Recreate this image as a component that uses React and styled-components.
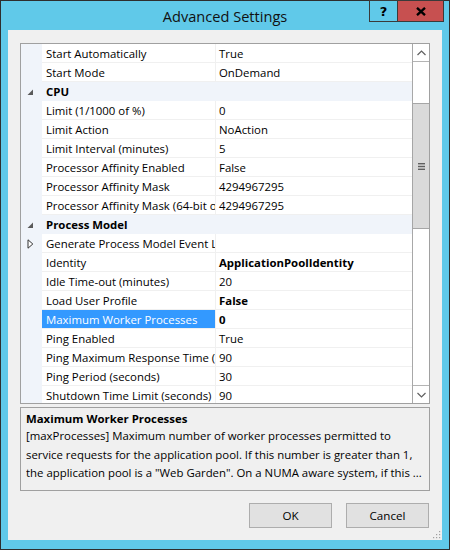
import React from 'react';
import styled, { createGlobalStyle } from 'styled-components';

const UI_FONT = `"Segoe UI", "Open Sans", "Noto Sans", sans-serif`;

const GlobalStyle = createGlobalStyle`
  html, body { margin: 0; padding: 0; background: #5fcbe9; }
  body { font-family: ${UI_FONT}; }
  * { box-sizing: border-box; }
`;

const Frame = styled.div`
  position: relative;
  width: 450px;
  height: 550px;
  border: 1px solid #2e2e2e;
  background: #60c9e9;
  display: flex;
  flex-direction: column;
`;

const TitleBar = styled.div`
  height: 29px;
  display: grid;
  grid-template-columns: 1fr auto 1fr;
  align-items: start;
`;

const Title = styled.div`
  grid-column: 2;
  font-size: 14.6px;
  color: #111;
  line-height: 29px;
  padding-top: 1px;
`;

const CaptionButtons = styled.div`
  grid-column: 3;
  justify-self: end;
  display: flex;
  margin-right: 5px;
  margin-top: -1px;
`;

const CaptionButton = styled.div`
  width: ${p => p.$w}px;
  height: 22px;
  border: 1px solid #3a3a3a;
  margin-left: ${p => (p.$joined ? '-1px' : '0')};
  background: ${p => p.$bg || 'transparent'};
  display: flex;
  align-items: center;
  justify-content: center;
  font-family: "DejaVu Sans", sans-serif;
  font-weight: bold;
  font-size: 13px;
  color: #000;
`;

const Client = styled.div`
  flex: 1;
  margin: 0 7px 9px 7px;
  background: #f0f0f0;
  padding: 13px 12px 12px 12px;
  display: flex;
  flex-direction: column;
`;

const GridBox = styled.div`
  height: 361px;
  border: 1px solid #a0a0a0;
  background: #fff;
  display: flex;
  overflow: hidden;
`;

const Rows = styled.div`
  flex: 1;
  display: flex;
  flex-direction: column;
  overflow: hidden;
`;

const Row = styled.div`
  flex: 0 0 19px;
  height: 19px;
  display: grid;
  grid-template-columns: 21px 174px 1fr;
  background: ${p => (p.$cat ? '#f0f4fa' : '#fff')};
  font-size: 11.4px;
  color: #000;
`;

const Gutter = styled.div`
  background: #f0f4fa;
  display: flex;
  align-items: center;
  justify-content: center;
`;

const NameCell = styled.div`
  padding-left: 4px;
  line-height: 19.5px;
  white-space: nowrap;
  overflow: hidden;
  border-bottom: 1px solid #f0f0f0;
  border-right: 1px solid #f0f0f0;
  background: ${p => (p.$selected ? '#3399ff' : 'transparent')};
  color: ${p => (p.$selected ? '#fff' : '#000')};
`;

const ValueCell = styled.div`
  padding-left: 3px;
  line-height: 19.5px;
  white-space: nowrap;
  overflow: hidden;
  border-bottom: 1px solid #f0f0f0;
  font-weight: ${p => (p.$bold ? 700 : 400)};
`;

const CategoryCell = styled.div`
  grid-column: 2 / 4;
  padding-left: 4px;
  line-height: 19.5px;
  font-weight: 700;
  border-bottom: 1px solid #f0f0f0;
`;

const ScrollBar = styled.div`
  width: 17px;
  border-left: 1px solid #a8a8a8;
  background: #fff;
  display: flex;
  flex-direction: column;
`;

const ScrollButton = styled.div`
  height: 18px;
  flex: 0 0 18px;
  display: flex;
  align-items: center;
  justify-content: center;
  border-top: ${p => (p.$down ? '1px solid #b4b4b4' : 'none')};
  border-bottom: ${p => (p.$down ? 'none' : '1px solid #b4b4b4')};
`;

const Track = styled.div`
  flex: 1;
  display: flex;
  flex-direction: column;
  padding-top: 41px;
`;

const Thumb = styled.div`
  height: 126px;
  margin-left: -1px;
  background: #dadada;
  border: 1px solid #a6a6a6;
  border-right: none;
  display: flex;
  align-items: center;
  justify-content: center;
`;

const Description = styled.div`
  margin-top: 3px;
  height: 84px;
  border: 1px solid #a0a0a0;
  background: #f0f0f0;
  padding: 2px 5px;
  font-size: 11.4px;
  color: #000;
`;

const DescTitle = styled.div`
  font-weight: 700;
  line-height: 17px;
  margin-bottom: 0;
`;

const DescLine = styled.div`
  line-height: 18.5px;
  white-space: nowrap;
  overflow: hidden;
`;

const ButtonRow = styled.div`
  margin-top: auto;
  display: flex;
  justify-content: flex-end;
  gap: 14px;
  padding-right: 1px;
`;

const DialogButton = styled.button`
  width: 83px;
  height: 25px;
  border: 1px solid #adadad;
  background: #e1e1e1;
  font-family: ${UI_FONT};
  font-size: 11.6px;
  color: #000;
  padding: 0;
`;

const Grip = styled.svg`
  position: absolute;
  right: 8px;
  bottom: 10px;
`;

const rows = [
  { name: 'Start Automatically', value: 'True' },
  { name: 'Start Mode', value: 'OnDemand' },
  { cat: 'CPU' },
  { name: 'Limit (1/1000 of %)', value: '0' },
  { name: 'Limit Action', value: 'NoAction' },
  { name: 'Limit Interval (minutes)', value: '5' },
  { name: 'Processor Affinity Enabled', value: 'False' },
  { name: 'Processor Affinity Mask', value: '4294967295' },
  { name: 'Processor Affinity Mask (64-bit option)', value: '4294967295' },
  { cat: 'Process Model' },
  { name: 'Generate Process Model Event Log Entry', value: '', expander: true },
  { name: 'Identity', value: 'ApplicationPoolIdentity', bold: true },
  { name: 'Idle Time-out (minutes)', value: '20' },
  { name: 'Load User Profile', value: 'False', bold: true },
  { name: 'Maximum Worker Processes', value: '0', bold: true, selected: true },
  { name: 'Ping Enabled', value: 'True' },
  { name: 'Ping Maximum Response Time (seconds)', value: '90' },
  { name: 'Ping Period (seconds)', value: '30' },
  { name: 'Shutdown Time Limit (seconds)', value: '90' },
];

const CollapseGlyph = () => (
  <svg width="7" height="7" viewBox="0 0 7 7" style={{ marginLeft: '-2px' }}>
    <polygon points="6,0.5 6,6 0.5,6" fill="#5a5a5a" />
  </svg>
);

const ExpandGlyph = () => (
  <svg width="7" height="10" viewBox="0 0 7 10" style={{ marginLeft: '-2px' }}>
    <polygon points="1,0.8 5.8,5 1,9.2" fill="#fff" stroke="#333" strokeWidth="1" />
  </svg>
);

export default function App() {
  return (
    <>
      <GlobalStyle />
      <Frame>
        <TitleBar>
          <Title>Advanced Settings</Title>
          <CaptionButtons>
            <CaptionButton $w={29}>?</CaptionButton>
            <CaptionButton $w={47} $joined $bg="#c75050">
              <svg width="10" height="9" viewBox="0 0 10 9">
                <path d="M1 0.8 L9 8.2 M9 0.8 L1 8.2" stroke="#000" strokeWidth="2.3" />
              </svg>
            </CaptionButton>
          </CaptionButtons>
        </TitleBar>
        <Client>
          <GridBox>
            <Rows>
              {rows.map((r, i) =>
                r.cat ? (
                  <Row key={i} $cat>
                    <Gutter>
                      <CollapseGlyph />
                    </Gutter>
                    <CategoryCell>{r.cat}</CategoryCell>
                  </Row>
                ) : (
                  <Row key={i}>
                    <Gutter>{r.expander && <ExpandGlyph />}</Gutter>
                    <NameCell $selected={r.selected}>{r.name}</NameCell>
                    <ValueCell $bold={r.bold}>{r.value}</ValueCell>
                  </Row>
                )
              )}
            </Rows>
            <ScrollBar>
              <ScrollButton>
                <svg width="9" height="6" viewBox="0 0 9 6">
                  <polyline points="0.5,5 4.5,1 8.5,5" fill="none" stroke="#606060" strokeWidth="1.2" />
                </svg>
              </ScrollButton>
              <Track>
                <Thumb>
                  <svg width="7" height="7" viewBox="0 0 7 7">
                    <rect x="0" y="0" width="7" height="1.4" fill="#606060" />
                    <rect x="0" y="2.8" width="7" height="1.4" fill="#606060" />
                    <rect x="0" y="5.6" width="7" height="1.4" fill="#606060" />
                  </svg>
                </Thumb>
              </Track>
              <ScrollButton $down>
                <svg width="9" height="6" viewBox="0 0 9 6">
                  <polyline points="0.5,1 4.5,5 8.5,1" fill="none" stroke="#606060" strokeWidth="1.2" />
                </svg>
              </ScrollButton>
            </ScrollBar>
          </GridBox>
          <Description>
            <DescTitle>Maximum Worker Processes</DescTitle>
            <DescLine>[maxProcesses] Maximum number of worker processes permitted to</DescLine>
            <DescLine>service requests for the application pool. If this number is greater than 1,</DescLine>
            <DescLine>the application pool is a "Web Garden". On a NUMA aware system, if this ...</DescLine>
          </Description>
          <ButtonRow>
            <DialogButton>OK</DialogButton>
            <DialogButton>Cancel</DialogButton>
          </ButtonRow>
        </Client>
        <Grip width="8" height="8" viewBox="0 0 8 8">
          <rect x="6" y="0" width="1.2" height="1.2" fill="#a0a0a0" />
          <rect x="3" y="3" width="1.2" height="1.2" fill="#a0a0a0" />
          <rect x="6" y="3" width="1.2" height="1.2" fill="#a0a0a0" />
          <rect x="0" y="6" width="1.2" height="1.2" fill="#a0a0a0" />
          <rect x="3" y="6" width="1.2" height="1.2" fill="#a0a0a0" />
          <rect x="6" y="6" width="1.2" height="1.2" fill="#a0a0a0" />
        </Grip>
      </Frame>
    </>
  );
}
